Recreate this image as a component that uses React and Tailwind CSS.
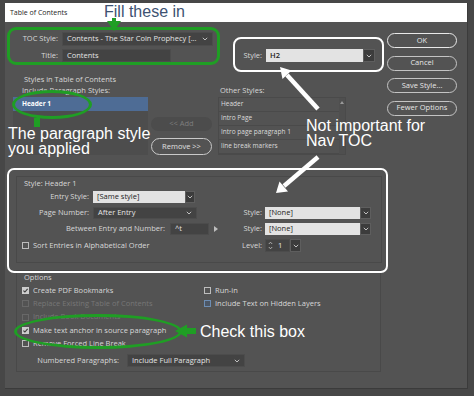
const lbl = "text-[7.5px] leading-none text-[#d8d8d8] whitespace-nowrap";

const Chev = ({ c = "#cfcfcf" }) => (
  <svg width="6" height="4" viewBox="0 0 6 4">
    <path d="M0.8 0.8 L3 3 L5.2 0.8" stroke={c} strokeWidth="0.9" fill="none" />
  </svg>
);

function ChevBox({ className }) {
  return (
    <div className={`flex items-center justify-center bg-[#3c3c3c] border border-[#5e5e5e] ${className}`}>
      <Chev />
    </div>
  );
}

function DarkSelect({ className, text }) {
  return (
    <div className={`flex items-center justify-between bg-[#434343] border border-[#4c4c4c] pl-[4px] pr-[4px] ${className}`}>
      <span className="text-[7.5px] leading-none text-[#e4e4e4] whitespace-nowrap">{text}</span>
      <Chev />
    </div>
  );
}

function LightSelect({ className, text, bold }) {
  return (
    <div className={`flex items-center bg-[#e3e3e3] pl-[4px] text-[7.5px] leading-none text-[#1c1c1c] whitespace-nowrap ${bold ? "font-semibold" : ""} ${className}`}>
      {text}
    </div>
  );
}

function Box({ kind }) {
  if (kind === "checked") {
    return (
      <div className="w-[7px] h-[7px] bg-[#cdcdcd] flex items-center justify-center shrink-0">
        <svg width="7" height="7" viewBox="0 0 7 7">
          <path d="M1.4 3.6 L2.9 5 L5.6 1.9" stroke="#3a3a3a" strokeWidth="1.1" fill="none" />
        </svg>
      </div>
    );
  }
  if (kind === "disabled") return <div className="w-[7px] h-[7px] border border-[#686868] shrink-0" />;
  if (kind === "blue") return <div className="w-[7px] h-[7px] border border-[#6d8db3] bg-[#4c5766] shrink-0" />;
  return <div className="w-[7px] h-[7px] border border-[#bdbdbd] shrink-0" />;
}

function CheckRow({ kind, text, dim }) {
  return (
    <div className="flex items-center">
      <Box kind={kind} />
      <span className={`ml-[4px] text-[7.5px] leading-none whitespace-nowrap ${dim ? "text-[#777777]" : "text-[#d8d8d8]"}`}>{text}</span>
    </div>
  );
}

export default function App() {
  return (
    <div className="relative w-[474px] h-[396px] overflow-hidden bg-[#474747] font-['Open_Sans',sans-serif] flex flex-col">
      <div className="mt-[3px] ml-[5px] w-[463px] h-[386px] bg-[#535353] border-r border-b border-[#3b3b3b] flex flex-col">
        <div className="h-[19px] shrink-0 bg-white flex items-center pl-[5px] text-[7px] leading-none text-[#1e1e1e]">
          Table of Contents
        </div>
        <div className="flex flex-1">
          {/* left column */}
          <div className="w-[380px] flex flex-col">
            {/* row 1 */}
            <div className="mt-[10px] flex items-start">
              <div className="grid grid-cols-[53px_151px] gap-x-[4px] gap-y-[3px] items-center">
                <div className={`${lbl} text-right`}>TOC Style:</div>
                <DarkSelect className="h-[14px] w-[151px]" text="Contents - The Star Coin Prophecy [..." />
                <div className={`${lbl} text-right`}>Title:</div>
                <div className="h-[13px] w-[109px] bg-[#434343] border border-[#4c4c4c] pl-[4px] flex items-center text-[7.5px] leading-none text-[#e4e4e4]">
                  Contents
                </div>
              </div>
              <div className="ml-[26px] mt-[17px] flex items-center">
                <div className={`${lbl} w-[23px] text-right`}>Style:</div>
                <LightSelect className="ml-[4px] h-[13px] w-[97px]" text="H2" bold />
                <ChevBox className="h-[13px] w-[12px]" />
              </div>
            </div>

            {/* styles in toc */}
            <div className="mt-[12px] ml-[8px] flex flex-col">
              <div className={`${lbl} h-[11px] pl-[11px] flex items-center`}>Styles in Table of Contents</div>
              <div className="h-[12px] flex items-center">
                <div className={`${lbl} w-[207px] pl-[9px]`}>Include Paragraph Styles:</div>
                <div className={lbl}>Other Styles:</div>
              </div>
              <div className="flex">
                <div className="w-[135px] h-[58px] bg-[#4d4d4d] flex flex-col">
                  <div className="h-[14px] bg-[#4e6c95] pl-[9px] flex items-center text-[6.5px] leading-none font-bold text-white">
                    Header 1
                  </div>
                </div>
                <div className="ml-[3px] w-[61px] flex flex-col">
                  <div className="mt-[20px] h-[14px] rounded-[7px] bg-[#4c4c4c] flex items-center justify-center text-[7.5px] leading-none text-[#7e7e7e]">
                    &lt;&lt; Add
                  </div>
                  <div className="mt-[7px] h-[17px] rounded-full border border-[#c9c9c9] flex items-center justify-center text-[7.5px] leading-none text-[#e0e0e0]">
                    Remove &gt;&gt;
                  </div>
                </div>
                <div className="ml-[6px] w-[128px] h-[58px] border border-[#4a4a4a] flex">
                  <div className="flex-1 flex flex-col">
                    {["Header", "Intro Page", "Intro page paragraph 1", "line break markers"].map((t) => (
                      <div key={t} className="h-[14px] border-b border-[#4a4a4a] pl-[2px] flex items-center text-[6.5px] leading-none text-[#dcdcdc] whitespace-nowrap">
                        {t}
                      </div>
                    ))}
                  </div>
                  <div className="w-[6px] bg-[#4f4f4f] flex justify-center pt-[3px]">
                    <svg width="4" height="3" viewBox="0 0 4 3">
                      <path d="M0 3 L2 0 L4 3 Z" fill="#9a9a9a" />
                    </svg>
                  </div>
                </div>
              </div>
            </div>

            {/* style header 1 panel */}
            <div className="mt-[21px] ml-[11px] w-[366px] h-[87px] border border-[#494949] flex flex-col">
              <div className={`${lbl} h-[12px] mt-[1px] pl-[7px] flex items-center`}>Style: Header 1</div>
              <div className="mt-[1px] h-[12px] flex items-center">
                <div className={`${lbl} w-[72px] text-right`}>Entry Style:</div>
                <LightSelect className="ml-[4px] h-[12px] w-[92px]" text="[Same style]" />
                <ChevBox className="h-[12px] w-[10px]" />
              </div>
              <div className="mt-[4px] h-[12px] flex items-center">
                <div className="w-[213px] flex items-center">
                  <div className={`${lbl} w-[72px] text-right`}>Page Number:</div>
                  <DarkSelect className="ml-[4px] h-[12px] w-[104px]" text="After Entry" />
                </div>
                <div className={`${lbl} w-[32px] text-right`}>Style:</div>
                <LightSelect className="ml-[3px] h-[12px] w-[95px]" text="[None]" />
                <ChevBox className="h-[12px] w-[11px]" />
              </div>
              <div className="mt-[4px] h-[12px] flex items-center">
                <div className="w-[213px] flex items-center">
                  <div className={`${lbl} w-[148px] text-right`}>Between Entry and Number:</div>
                  <div className="ml-[5px] h-[12px] w-[39px] bg-[#434343] border border-[#4c4c4c] pl-[4px] flex items-center text-[7.5px] leading-none text-[#e4e4e4]">
                    ^t
                  </div>
                  <svg className="ml-[5px]" width="4" height="6" viewBox="0 0 4 6">
                    <path d="M0 0 L4 3 L0 6 Z" fill="#bdbdbd" />
                  </svg>
                </div>
                <div className={`${lbl} w-[32px] text-right`}>Style:</div>
                <LightSelect className="ml-[3px] h-[12px] w-[95px]" text="[None]" />
                <ChevBox className="h-[12px] w-[11px]" />
              </div>
              <div className="mt-[4px] h-[13px] flex items-center">
                <div className="w-[213px] pl-[5px] flex items-center">
                  <CheckRow kind="empty" text="Sort Entries in Alphabetical Order" />
                </div>
                <div className={`${lbl} w-[32px] text-right`}>Level:</div>
                <div className="ml-[3px] h-[13px] w-[25px] bg-[#434343] border border-[#4c4c4c] flex items-center pl-[2px]">
                  <svg width="5" height="9" viewBox="0 0 5 9">
                    <path d="M0.8 3 L2.5 1.2 L4.2 3 M0.8 6 L2.5 7.8 L4.2 6" stroke="#c8c8c8" strokeWidth="0.8" fill="none" />
                  </svg>
                  <span className="ml-[5px] text-[7.5px] leading-none text-[#e4e4e4]">1</span>
                </div>
                <ChevBox className="h-[13px] w-[11px]" />
              </div>
            </div>

            {/* options panel */}
            <div className="mt-[7px] ml-[11px] w-[365px] h-[102px] border border-[#494949] flex flex-col">
              <div className={`${lbl} h-[13px] pl-[7px] flex items-center`}>Options</div>
              <div className="h-[13.25px] flex items-center">
                <div className="w-[187px] pl-[5px]"><CheckRow kind="checked" text="Create PDF Bookmarks" /></div>
                <CheckRow kind="empty" text="Run-in" />
              </div>
              <div className="h-[13.25px] flex items-center">
                <div className="w-[187px] pl-[5px]"><CheckRow kind="disabled" text="Replace Existing Table of Contents" dim /></div>
                <CheckRow kind="blue" text="Include Text on Hidden Layers" />
              </div>
              <div className="h-[13.25px] flex items-center">
                <div className="w-[187px] pl-[5px]"><CheckRow kind="disabled" text="Include Book Documents" dim /></div>
              </div>
              <div className="h-[13.25px] flex items-center">
                <div className="w-[187px] pl-[5px]"><CheckRow kind="checked" text="Make text anchor in source paragraph" /></div>
              </div>
              <div className="h-[13.25px] flex items-center">
                <div className="w-[187px] pl-[5px]"><CheckRow kind="empty" text="Remove Forced Line Break" /></div>
              </div>
              <div className="mt-[4px] h-[13px] flex items-center">
                <div className={`${lbl} w-[102px] text-right`}>Numbered Paragraphs:</div>
                <DarkSelect className="ml-[8px] h-[13px] w-[118px]" text="Include Full Paragraph" />
              </div>
            </div>
          </div>

          {/* right buttons */}
          <div className="ml-[2px] mt-[11px] w-[70px] flex flex-col gap-[7.5px]">
            {["OK", "Cancel", "Save Style...", "Fewer Options"].map((t, i) => (
              <div
                key={t}
                className={`h-[15px] rounded-full border-[1.5px] flex items-center justify-center text-[7.5px] leading-none text-[#e6e6e6] ${i === 0 ? "border-[#e8e8e8]" : "border-[#c4c4c4]"}`}
              >
                {t}
              </div>
            ))}
          </div>
        </div>
      </div>

      {/* ===== annotations (overlays) ===== */}
      <div className="absolute left-[104px] top-[4px] text-[16px] leading-[16px] font-['Liberation_Sans',Arial,sans-serif] text-[#3d5272] whitespace-nowrap">
        Fill these in
      </div>
      <div className="absolute left-[7px] top-[27px] w-[213px] h-[38px] border-[3px] border-[#1f9e24] rounded-[9px] pointer-events-none" />
      <div className="absolute left-[12px] top-[90px] w-[80px] h-[29px] border-[3px] border-[#1f9e24] rounded-[50%] pointer-events-none" />
      <div className="absolute left-[8px] top-[126px] text-[16px] leading-[15px] font-['Liberation_Sans',Arial,sans-serif] text-white whitespace-nowrap">
        The paragraph style
        <br />
        you applied
      </div>
      <div className="absolute left-[233px] top-[37px] w-[151px] h-[35px] border-[2.5px] border-white rounded-[8px] pointer-events-none" />
      <div className="absolute left-[306px] top-[118px] text-[16px] leading-[15px] font-['Liberation_Sans',Arial,sans-serif] text-white whitespace-nowrap">
        Not important for
        <br />
        Nav TOC
      </div>
      <div className="absolute left-[7px] top-[168px] w-[381px] h-[105px] border-[2.5px] border-white rounded-[7px] pointer-events-none" />
      <div className="absolute left-[14px] top-[314px] w-[168px] h-[35px] border-[3px] border-[#1f9e24] rounded-[50%] pointer-events-none" />
      <div className="absolute left-[200px] top-[324px] text-[16px] leading-[16px] font-['Liberation_Sans',Arial,sans-serif] text-white whitespace-nowrap">
        Check this box
      </div>
      <svg className="absolute left-0 top-0 pointer-events-none" width="474" height="396" viewBox="0 0 474 396">
        {/* green arrow down */}
        <rect x="112" y="18" width="4" height="4" fill="#1f9e24" />
        <polygon points="107,21 121,21 114,31" fill="#1f9e24" />
        {/* green stub under Header 1 ellipse */}
        <rect x="34" y="118" width="6" height="9" fill="#1f9e24" />
        {/* green arrow left */}
        <rect x="185" y="328" width="11" height="6" fill="#1f9e24" />
        <polygon points="175,331 187,324.5 187,337.5" fill="#1f9e24" />
        {/* white arrows */}
        <line x1="318" y1="109" x2="287" y2="75" stroke="white" strokeWidth="4.5" />
        <polygon points="280,67 291.5,70.5 282.5,79" fill="white" />
        <line x1="318" y1="157" x2="284" y2="186" stroke="white" strokeWidth="4.5" />
        <polygon points="276,193 288,191.5 279.5,181.5" fill="white" />
      </svg>
    </div>
  );
}
